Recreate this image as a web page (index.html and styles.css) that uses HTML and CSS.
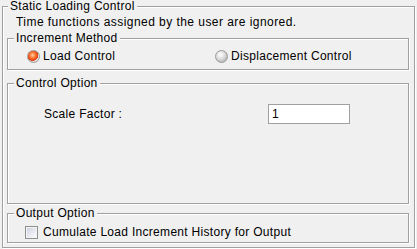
FILE: index.html
```html
<!DOCTYPE html>
<html>
<head>
<meta charset="utf-8">
<link rel="stylesheet" href="styles.css">
</head>
<body>
<div class="panel">
  <div class="title title-outer">Static Loading Control</div>
  <div class="info">Time functions assigned by the user are ignored.</div>

  <div class="group group-inc">
    <div class="title">Increment Method</div>
    <div class="radios">
      <label class="radio first"><span class="dot on"></span>Load Control</label>
      <label class="radio"><span class="dot"></span>Displacement Control</label>
    </div>
  </div>

  <div class="group group-ctrl">
    <div class="title">Control Option</div>
    <div class="field">
      <span class="field-label">Scale Factor :</span>
      <span class="input">1</span>
    </div>
  </div>

  <div class="group group-out">
    <div class="title">Output Option</div>
    <label class="check"><span class="box"></span>Cumulate Load Increment History for Output</label>
  </div>
</div>
</body>
</html>
```

FILE: styles.css
```css
html, body {
  margin: 0;
  padding: 0;
  background: #f0f0f0;
}
body {
  width: 417px;
  height: 249px;
  overflow: hidden;
  font-family: "Liberation Sans", Arial, sans-serif;
  font-size: 12px;
  letter-spacing: 0.3px;
  color: #000;
}
.panel {
  box-sizing: border-box;
  margin: 6px 2px 0 2px;
  height: 242px;
  border: 1px solid #a0a0a0;
  box-shadow: inset 1px 1px 0 #fff, 1px 1px 0 #fff;
  padding: 0 5px 0 4px;
}
.title {
  width: fit-content;
  margin-top: -7px;
  margin-left: 6px;
  padding: 0 2px;
  line-height: 13px;
  height: 13px;
  background: #f0f0f0;
  white-space: nowrap;
}
.title-outer {
  margin-left: 1px;
}
.info {
  margin-top: 2px;
  margin-left: 9px;
  line-height: 14px;
  letter-spacing: 0.45px;
}
.group {
  box-sizing: border-box;
  border: 1px solid #a0a0a0;
  box-shadow: inset 1px 1px 0 #fff, 1px 1px 0 #fff;
}
.group-inc {
  margin-top: 9px;
  height: 32px;
}
.group-ctrl {
  margin-top: 13px;
  height: 121px;
}
.group-out {
  margin-top: 9px;
  height: 30px;
}
.radios {
  display: flex;
  margin-top: 4px;
  padding-left: 19px;
  line-height: 14px;
}
.radio {
  display: flex;
  align-items: center;
  gap: 3px;
}
.radio.first {
  width: 188px;
}
.dot {
  box-sizing: border-box;
  width: 13px;
  height: 13px;
  border-radius: 50%;
  border: 1px solid #9a9a9a;
  background: radial-gradient(circle at 40% 35%, #ffffff 0%, #e4e4e4 35%, #b4b4b4 80%, #a0a0a0 100%);
}
.dot.on {
  background:
    radial-gradient(circle at 42% 38%, #ffd0a8 0%, #ff7a36 30%, #e03c10 58%, transparent 63%),
    radial-gradient(circle at 50% 50%, #f4f4f4 0%, #d4d4d4 100%);
}
.field {
  display: flex;
  align-items: center;
  margin-top: 14px;
  padding-left: 36px;
}
.field-label {
  width: 224px;
}
.input {
  box-sizing: border-box;
  width: 82px;
  height: 20px;
  border: 1px solid #a0a0a0;
  background: #fff;
  padding: 0 3px;
  line-height: 18px;
}
.check {
  display: flex;
  align-items: center;
  gap: 5px;
  margin-top: 5px;
  padding-left: 17px;
  line-height: 14px;
}
.box {
  box-sizing: border-box;
  width: 13px;
  height: 13px;
  border: 1px solid #8e8f8f;
  background: linear-gradient(135deg, #c9cede 0%, #e6e8f0 50%, #ffffff 100%);
  box-shadow: inset 0 0 0 1px #f4f4f4;
}
```
